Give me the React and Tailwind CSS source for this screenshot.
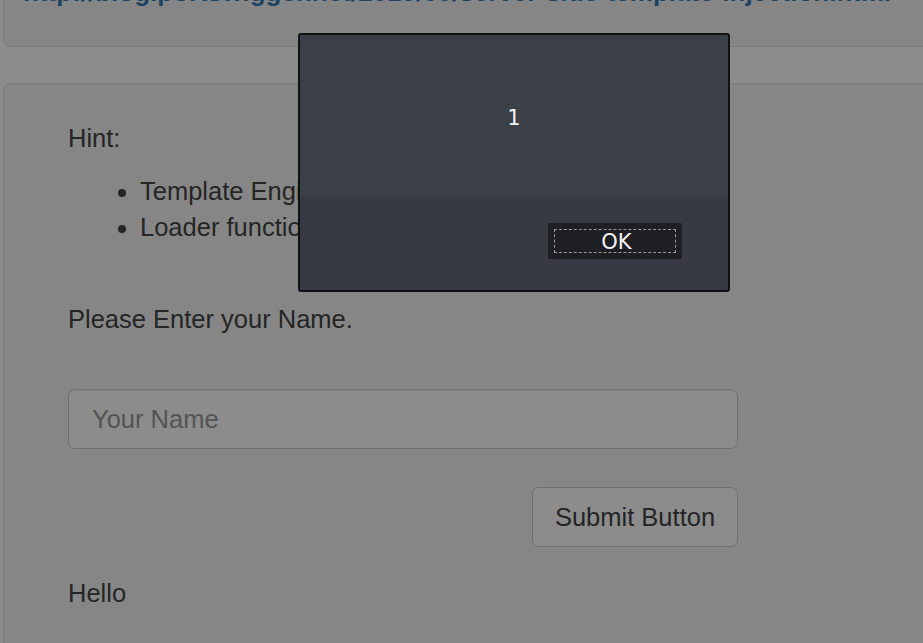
export default function App() {
  return (
    <div className="relative h-[643px] w-[923px] overflow-hidden bg-white text-[25.5px] leading-[36px] text-[#444444] [font-family:'Liberation_Sans',Arial,sans-serif]">
      <div className="ml-[3px] w-[980px]">
        <div className="mt-[-60px] mb-[36px] rounded-[7px] border border-[#e3e3e3] bg-[#f5f5f5] pt-[33px] pb-[36px] pl-[19px] shadow-[inset_0_1px_1px_rgba(0,0,0,0.05)]">
          <a className="whitespace-nowrap text-[26px] font-bold text-[#337ab7]">
            http://blog.portswigger.net/2015/08/server-side-template-injection.html
          </a>
        </div>
        <div className="h-[600px] rounded-[7px] border border-[#e3e3e3] bg-[#f5f5f5] pt-[36px] pl-[64px] shadow-[inset_0_1px_1px_rgba(0,0,0,0.05)]">
          <p className="mb-[17px]">Hint:</p>
          <ul className="list-disc pl-[72px]">
            <li>Template Engine: Jinja2</li>
            <li>Loader function: render_template_string</li>
          </ul>
          <p className="mt-[56px]">Please Enter your Name.</p>
          <div className="mt-[52px] flex w-[670px] flex-col items-end">
            <div className="flex h-[60px] w-full items-center rounded-[7px] border border-[#cccccc] bg-white pl-[23px] text-[#999999] shadow-[inset_0_1px_1px_rgba(0,0,0,0.075)]">
              Your Name
            </div>
            <div className="mt-[38px] flex h-[60px] w-[206px] items-center justify-center rounded-[7px] border border-[#cccccc] bg-white text-[#444444]">
              Submit Button
            </div>
          </div>
          <p className="mt-[28px]">Hello</p>
        </div>
      </div>

      <div className="absolute inset-0 bg-black/45" />

      <div className="absolute left-[298px] top-[33px] flex h-[259px] w-[432px] flex-col overflow-hidden rounded-[3px] border-2 border-[#111214] bg-[#3b3f48] text-[21px] text-white [font-family:'DejaVu_Sans',sans-serif]">
        <div className="flex h-[162px] items-start justify-center pt-[73px] leading-none">
          <span className="text-[#f2f2f2]">1</span>
        </div>
        <div className="flex flex-1 items-start justify-end bg-[#373a43] pt-[26px] pr-[46px]">
          <div className="flex h-[36px] w-[134px] items-center justify-center rounded-[2px] bg-[#1d1f23] p-[6px]">
            <div className="flex h-full w-full items-center justify-center border border-dashed border-[#9a9a9a] pl-[3px] pt-[2px] leading-none text-[#f2f2f2]">
              OK
            </div>
          </div>
        </div>
      </div>
    </div>
  );
}
